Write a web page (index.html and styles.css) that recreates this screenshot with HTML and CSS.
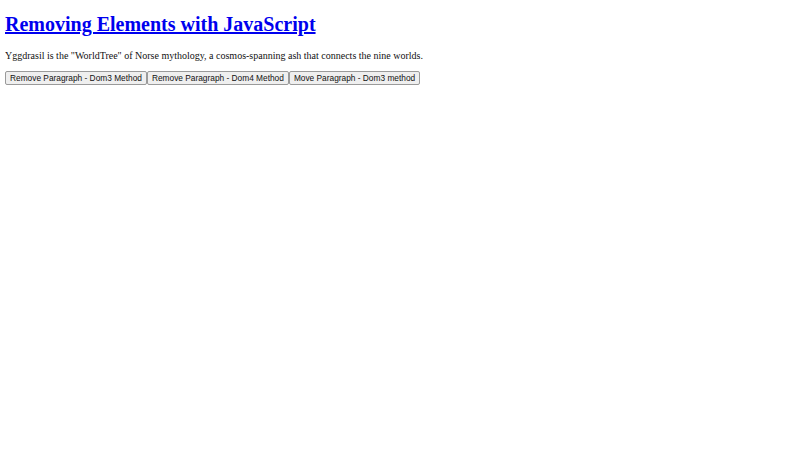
FILE: index.html
```html
<!DOCTYPE html>
<html>
<head>
<meta charset="utf-8">
<title>Removing Elements with JavaScript</title>
<link rel="stylesheet" href="styles.css">
</head>
<body>
<h1 class="title"><a class="title-link" href="#">Removing Elements with JavaScript</a></h1>
<p class="intro">Yggdrasil is the "WorldTree" of Norse mythology, a cosmos-spanning ash that connects the nine worlds.</p>
<div class="actions"><button class="btn" type="button">Remove Paragraph - Dom3 Method</button><button class="btn" type="button">Remove Paragraph - Dom4 Method</button><button class="btn" type="button">Move Paragraph - Dom3 method</button></div>
</body>
</html>
```
FILE: styles.css
```css
html {
  background: #ffffff;
}
body {
  margin: 5px;
  font-family: "Liberation Serif", "Times New Roman", serif;
  color: #000000;
}
.title {
  font-size: 20px;
  font-weight: bold;
  margin: 8.4px 0 13.4px;
}
.title-link {
  color: #0000ee;
  text-decoration: underline;
}
.intro {
  font-size: 10px;
  margin: 10px 0;
  color: #111111;
}
.actions {
  display: flex;
}
.btn {
  font-family: "Liberation Sans", Arial, sans-serif;
  font-size: 8.33px;
  padding: 1px 4px;
  margin: 0;
  border: 1px solid #9a9a9a;
  border-radius: 2px;
  background: #efefef;
  color: #111111;
}
```
